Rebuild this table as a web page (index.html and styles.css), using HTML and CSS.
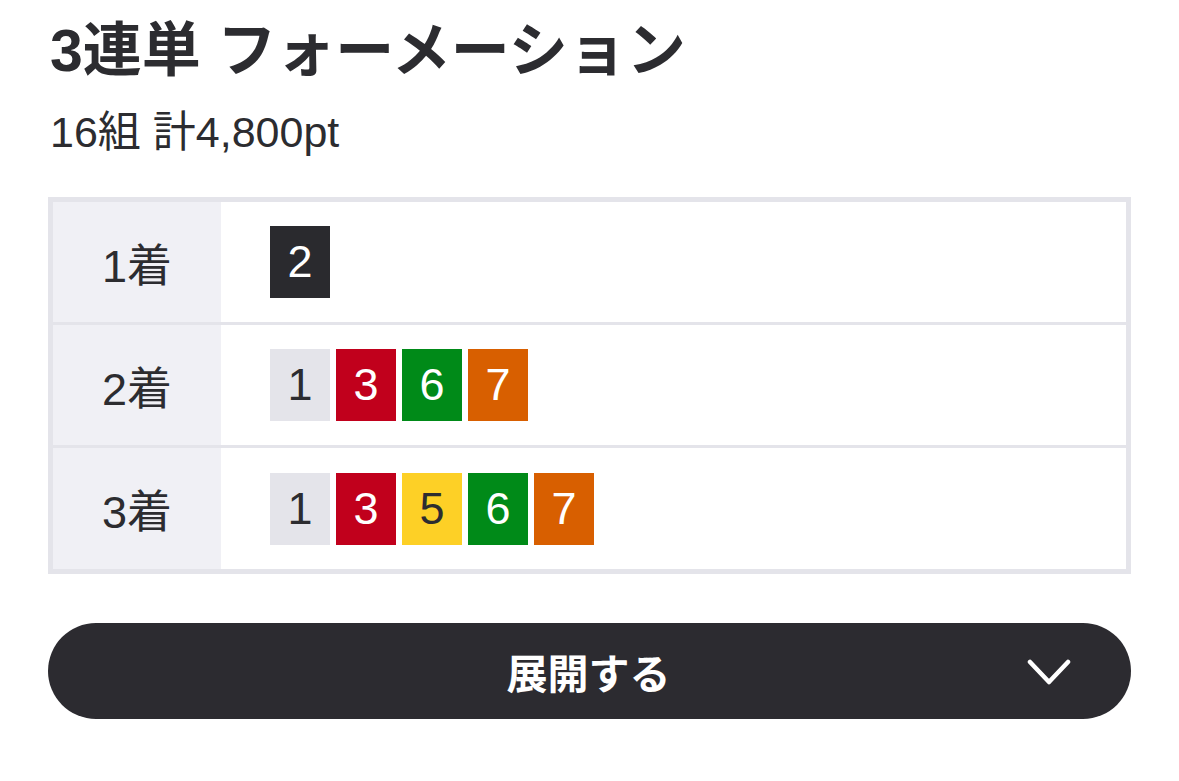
FILE: index.html
```html
<!DOCTYPE html>
<html lang="ja">
<head>
<meta charset="utf-8">
<link rel="stylesheet" href="styles.css">
</head>
<body>
<div class="wrap">
  <h1 class="title">3連単 フォーメーション</h1>
  <p class="sub">16組 計4,800pt</p>
  <div class="table">
    <div class="row">
      <div class="label">1着</div>
      <div class="cells">
        <span class="b b2">2</span>
      </div>
    </div>
    <div class="row">
      <div class="label">2着</div>
      <div class="cells">
        <span class="b b1">1</span>
        <span class="b b3">3</span>
        <span class="b b6">6</span>
        <span class="b b7">7</span>
      </div>
    </div>
    <div class="row">
      <div class="label">3着</div>
      <div class="cells">
        <span class="b b1">1</span>
        <span class="b b3">3</span>
        <span class="b b5">5</span>
        <span class="b b6">6</span>
        <span class="b b7">7</span>
      </div>
    </div>
  </div>
  <button class="btn">
    <span class="btn-text">展開する</span>
    <svg class="chev" width="44" height="28" viewBox="0 0 44 28"><path d="M3 4 L22 24 L41 4" fill="none" stroke="#fff" stroke-width="4.5" stroke-linecap="round" stroke-linejoin="round"/></svg>
  </button>
</div>
</body>
</html>
```
FILE: styles.css
```css
* { box-sizing: border-box; }
body {
  margin: 0;
  background: #fff;
  font-family: "Liberation Sans", "Noto Sans CJK JP", sans-serif;
  color: #2c2c30;
}
.wrap {
  width: 1179px;
  padding: 0 48px;
}
.title {
  margin: 18px 0 0 2px;
  font-size: 59px;
  line-height: 66px;
  font-weight: 700;
  color: #2c2c30;
}
.sub {
  margin: 24px 0 0 2px;
  font-size: 43px;
  line-height: 48px;
  color: #2c2c30;
}
.table {
  margin-top: 41px;
  border: 5px solid #e4e4ea;
  background: #e4e4ea;
  display: flex;
  flex-direction: column;
  gap: 3px;
}
.row {
  display: flex;
  height: 120px;
}
.row:last-child { height: 121px; }
.label {
  width: 168px;
  background: #f0f0f5;
  display: flex;
  align-items: center;
  justify-content: center;
  font-size: 45px;
  color: #2c2c30;
}
.cells {
  flex: 1;
  background: #fff;
  display: flex;
  align-items: center;
  gap: 6px;
  padding-left: 49px;
}
.b {
  width: 60px;
  height: 72px;
  display: flex;
  align-items: center;
  justify-content: center;
  font-size: 45px;
  color: #fff;
}
.b1 { background: #e4e4ea; color: #2c2c30; }
.b2 { background: #2a2a2e; }
.b3 { background: #c1001c; }
.b5 { background: #fdd026; color: #2c2c30; }
.b6 { background: #008a18; }
.b7 { background: #d85f00; }
.btn {
  margin-top: 49px;
  width: 100%;
  height: 96px;
  border: 0;
  border-radius: 48px;
  background: #2c2b30;
  color: #fff;
  display: flex;
  align-items: center;
  justify-content: center;
  position: relative;
  font-family: inherit;
  padding: 0;
}
.btn-text {
  font-size: 41px;
  font-weight: 700;
  margin-left: -2px;
}
.chev {
  position: absolute;
  right: 60px;
  top: 35px;
}
```
